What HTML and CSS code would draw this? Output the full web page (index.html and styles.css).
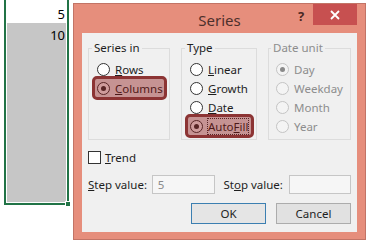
FILE: index.html
```html
<!DOCTYPE html>
<html lang="en">

<head>
    <meta charset="UTF-8">
    <title>Series</title>
    <link rel="stylesheet" href="styles.css">
</head>

<body>
    <div class="sheet">
        <div class="sel">
            <div class="cell active">5</div>
            <div class="cell rest">10</div>
            <span class="handle"></span>
        </div>
    </div>

    <div class="dialog">
        <div class="titlebar">
            <div class="title">Series</div>
            <span class="help">?</span>
            <span class="close">
                <svg width="10" height="10" viewBox="0 0 10 10">
                    <path d="M1 1L9 9M9 1L1 9" stroke="#fff" stroke-width="1.8" fill="none" />
                </svg>
            </span>
        </div>

        <div class="client">
            <div class="groups">
                <div class="group g-series">
                    <span class="legend">Series in</span>
                    <div class="opt"><span class="radio"></span><span><u>R</u>ows</span></div>
                    <div class="opt hl checked"><span class="radio"></span><span><u>C</u>olumns</span></div>
                </div>
                <div class="group g-type">
                    <span class="legend">Type</span>
                    <div class="opt"><span class="radio"></span><span><u>L</u>inear</span></div>
                    <div class="opt"><span class="radio"></span><span><u>G</u>rowth</span></div>
                    <div class="opt"><span class="radio"></span><span><u>D</u>ate</span></div>
                    <div class="opt hl wide checked"><span class="radio"></span><span class="focus">Auto<u>F</u>ill</span></div>
                </div>
                <div class="group g-unit disabled">
                    <span class="legend">Date unit</span>
                    <div class="opt checked"><span class="radio"></span><span>Day</span></div>
                    <div class="opt"><span class="radio"></span><span>Weekday</span></div>
                    <div class="opt"><span class="radio"></span><span>Month</span></div>
                    <div class="opt"><span class="radio"></span><span>Year</span></div>
                </div>
            </div>

            <div class="trend">
                <span class="check"></span><span><u>T</u>rend</span>
            </div>

            <div class="values">
                <label class="lbl-step"><u>S</u>tep value:</label>
                <div class="input step">5</div>
                <label class="lbl-stop">St<u>o</u>p value:</label>
                <div class="input stop"></div>
            </div>

            <div class="buttons">
                <div class="btn ok">OK</div>
                <div class="btn">Cancel</div>
            </div>
        </div>
    </div>
</body>

</html>
```

FILE: styles.css
```css
* {
    margin: 0;
    padding: 0;
    box-sizing: border-box;
}

body {
    display: flex;
    width: 367px;
    height: 242px;
    overflow: hidden;
    background: #fff;
    font-family: "Noto Sans", "DejaVu Sans", sans-serif;
    font-size: 11.5px;
    color: #1e1e1e;
}

/* spreadsheet selection */
.sheet {
    flex: none;
    width: 73px;
}

.sel {
    position: relative;
    display: flex;
    flex-direction: column;
    margin-left: 4px;
    width: 65px;
    height: 205px;
    padding: 0 1px 1px 1px;
    border: 2px solid #217346;
    border-top: 0;
    background: #fff;
}

.cell {
    padding-right: 1px;
    text-align: right;
    font-size: 13px;
    line-height: 18px;
    color: #000;
}

.cell.active {
    height: 23px;
    padding-top: 5px;
    background: #fff;
}

.cell.rest {
    flex: 1;
    padding-top: 3px;
    background: #c6c6c6;
}

.handle {
    position: absolute;
    right: -4px;
    bottom: -4px;
    width: 6px;
    height: 6px;
    background: #217346;
    border: 1px solid #fff;
}

/* dialog */
.dialog {
    display: flex;
    flex-direction: column;
    margin-top: 3px;
    width: 293px;
    height: 237px;
    padding: 0 8px 7px 8px;
    background: #e68e7c;
    border: 1px solid #c27466;
}

.titlebar {
    display: flex;
    height: 29px;
}

.title {
    flex: 1;
    padding: 4px 0 0 64px;
    text-align: center;
    font-size: 15px;
    line-height: 24px;
    color: #4d302c;
}

.help {
    width: 16px;
    margin-right: 4px;
    padding-top: 3px;
    text-align: center;
    font-weight: bold;
    font-size: 13px;
    line-height: 18px;
    color: #4a2824;
}

.close {
    display: flex;
    align-items: center;
    justify-content: center;
    width: 44px;
    height: 21px;
    background: #c75050;
}

.client {
    flex: 1;
    display: flex;
    flex-direction: column;
    padding: 0 6px;
    background: #f0f0f0;
}

.groups {
    display: flex;
    gap: 11px;
    margin-top: 15px;
}

.group {
    display: flex;
    flex-direction: column;
    padding: 0 0 3px 8px;
    border: 1px solid #dcdcdc;
}

.g-series {
    width: 82px;
}

.g-type {
    width: 76px;
}

.g-unit {
    width: 83px;
    padding-left: 7px;
}

.legend {
    align-self: flex-start;
    margin: -8px 0 5px -5px;
    padding: 0 2px;
    line-height: 14px;
    background: #f0f0f0;
}

.opt {
    position: relative;
    display: flex;
    flex: none;
    align-items: center;
    gap: 5px;
    width: max-content;
    height: 19px;
}

.radio {
    position: relative;
    flex: none;
    width: 13px;
    height: 13px;
    border: 1px solid #333;
    border-radius: 50%;
    background: #fff;
}

.checked .radio::after {
    content: "";
    position: absolute;
    left: 3px;
    top: 3px;
    width: 5px;
    height: 5px;
    border-radius: 50%;
    background: #333;
}

.disabled {
    color: #8d8d8d;
}

.disabled .radio {
    border-color: #c4c4c4;
    background: #f4f4f4;
}

.disabled .checked .radio::after {
    background: #8a8a8a;
}

.hl::after {
    content: "";
    position: absolute;
    left: -5px;
    right: -4px;
    top: -3px;
    bottom: -2px;
    border: 3px solid #8c3434;
    border-radius: 5px;
    background: rgba(140, 20, 20, 0.42);
}

.hl.wide::after {
    right: -6px;
}

.focus {
    outline: 1px dotted #333;
    outline-offset: 0;
}

.trend {
    display: flex;
    align-items: center;
    gap: 4px;
    height: 19px;
    margin-top: 8px;
}

.check {
    width: 13px;
    height: 13px;
    border: 1px solid #333;
    background: #fff;
}

.values {
    display: flex;
    align-items: center;
    height: 19px;
    margin-top: 8px;
}

.lbl-step {
    width: 64px;
}

.lbl-stop {
    width: 66px;
    margin-left: 9px;
}

.input {
    height: 19px;
    padding-left: 5px;
    border: 1px solid #c6c6c6;
    background: #f6f6f6;
    color: #8a8a8a;
    line-height: 17px;
}

.step {
    width: 63px;
}

.stop {
    width: 62px;
}

.buttons {
    display: flex;
    justify-content: flex-end;
    gap: 10px;
    margin-top: 9px;
}

.btn {
    width: 75px;
    height: 21px;
    border: 1px solid #acacac;
    background: #e1e1e1;
    text-align: center;
    line-height: 19px;
}

.btn.ok {
    border-color: #3c7fb1;
    background: #e5e5e5;
}
```
